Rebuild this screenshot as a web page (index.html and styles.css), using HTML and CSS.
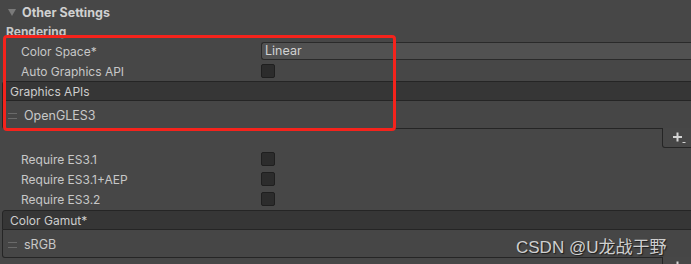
FILE: index.html
```html
<!DOCTYPE html>
<html lang="en">
<head>
  <meta charset="UTF-8">
  <title>Player Settings - Other Settings</title>
  <link rel="stylesheet" href="styles.css">
</head>
<body>
  <div class="inspector">
    <!-- Foldout title -->
    <div class="foldout">
      <span class="arrow"></span>
      <span class="foldout-title">Other Settings</span>
    </div>
    <div class="group-label">Rendering</div>

    <div class="field">
      <span class="label">Color Space*</span>
      <div class="dropdown">Linear</div>
    </div>
    <div class="field">
      <span class="label">Auto Graphics API</span>
      <span class="checkbox"></span>
    </div>

    <!-- Graphics APIs list -->
    <div class="list">
      <div class="list-header">Graphics APIs</div>
      <div class="list-body">
        <span class="handle"></span>
        <span class="item">OpenGLES3</span>
      </div>
      <div class="list-footer">
        <svg class="plus" width="14" height="12" viewBox="0 0 14 12">
          <path d="M4.5 0.5v9M0 5h9" stroke="#d4d4d4" stroke-width="2"/>
          <path d="M9.5 10.5h3" stroke="#d4d4d4" stroke-width="1"/>
        </svg>
      </div>
    </div>

    <div class="requires">
      <div class="field">
        <span class="label">Require ES3.1</span>
        <span class="checkbox"></span>
      </div>
      <div class="field">
        <span class="label">Require ES3.1+AEP</span>
        <span class="checkbox"></span>
      </div>
      <div class="field">
        <span class="label">Require ES3.2</span>
        <span class="checkbox"></span>
      </div>
    </div>

    <!-- Color Gamut list -->
    <div class="list">
      <div class="list-header">Color Gamut*</div>
      <div class="list-body">
        <span class="handle"></span>
        <span class="item">sRGB</span>
      </div>
      <div class="list-footer">
        <svg class="plus" width="14" height="12" viewBox="0 0 14 12">
          <path d="M4.5 0.5v9M0 5h9" stroke="#d4d4d4" stroke-width="2"/>
          <path d="M9.5 10.5h3" stroke="#d4d4d4" stroke-width="1"/>
        </svg>
      </div>
    </div>
  </div>

  <!-- annotation drawn over the screenshot -->
  <div class="highlight-box"></div>
  <div class="watermark">CSDN @U龙战于野</div>
</body>
</html>
```

FILE: styles.css
```css
html, body {
  margin: 0;
  height: 100%;
}
body {
  background: #474747;
  color: #c8c8c8;
  font-family: Inter, "Noto Sans", sans-serif;
  font-size: 12px;
  overflow: hidden;
  position: relative;
}
.inspector {
  width: 691px;
}

/* Foldout */
.foldout {
  display: flex;
  align-items: center;
  height: 24px;
  padding: 1px 0 0 8px;
  box-sizing: border-box;
}
.arrow {
  width: 0;
  height: 0;
  border-left: 4px solid transparent;
  border-right: 4px solid transparent;
  border-top: 7px solid #7a7a7a;
  margin-right: 6px;
}
.foldout-title {
  font-weight: bold;
  font-size: 12.5px;
  color: #d0d0d0;
}
.group-label {
  font-weight: bold;
  padding-left: 6px;
  height: 16px;
  line-height: 16px;
  color: #c8c8c8;
  margin-bottom: 1px;
}

/* Fields */
.field {
  display: flex;
  align-items: center;
  height: 20px;
  padding-left: 21px;
}
.label {
  width: 240px;
  flex-shrink: 0;
}
.dropdown {
  flex: 1;
  height: 18px;
  line-height: 16px;
  background: #515151;
  border: 1px solid #2a2a2a;
  border-right: none;
  border-radius: 3px 0 0 3px;
  padding-left: 3px;
  font-size: 12.5px;
  color: #d2d2d2;
  box-sizing: border-box;
}
.checkbox {
  width: 14px;
  height: 14px;
  box-sizing: border-box;
  background: #2c2c2c;
  border: 1px solid #1f1f1f;
  border-radius: 2px;
}

/* Reorderable list */
.list {
  margin-left: 2px;
  margin-right: -30px;
}
.list-header {
  height: 20px;
  line-height: 19px;
  background: #363636;
  border: 1px solid #252525;
  border-radius: 3px 3px 0 0;
  padding-left: 7px;
  box-sizing: border-box;
  color: #cdcdcd;
}
.list-body {
  display: flex;
  align-items: center;
  height: 28px;
  border: 1px solid #252525;
  border-top: none;
  border-radius: 0 0 0 3px;
  padding: 2px 0 0 5px;
  box-sizing: border-box;
  background: #464646;
}
.handle {
  width: 9px;
  height: 4px;
  border-top: 1px solid #6a6a6a;
  border-bottom: 1px solid #6a6a6a;
  margin-right: 7px;
}
.item {
  font-size: 12.5px;
}
.list-footer {
  position: relative;
  width: 90px;
  margin-left: 660px;
  height: 20px;
  margin-top: -1px;
  background: #474747;
  border: 1px solid #252525;
  border-top: none;
  border-radius: 0 0 0 3px;
  box-sizing: border-box;
  padding: 4px 0 0 10px;
}
.plus {
  display: block;
}

.requires {
  margin-top: 1px;
  margin-bottom: 1px;
}

/* overlays */
.highlight-box {
  position: absolute;
  left: 3px;
  top: 35px;
  width: 393px;
  height: 96px;
  box-sizing: border-box;
  border: 3px solid #f5231c;
  border-radius: 4px;
}
.watermark {
  position: absolute;
  left: 516px;
  top: 233px;
  font-family: "Liberation Sans", "Noto Sans CJK SC", sans-serif;
  font-size: 17px;
  color: #cfcfcf;
  text-shadow: 1px 1px 1px #1c1c1c;
}
```
